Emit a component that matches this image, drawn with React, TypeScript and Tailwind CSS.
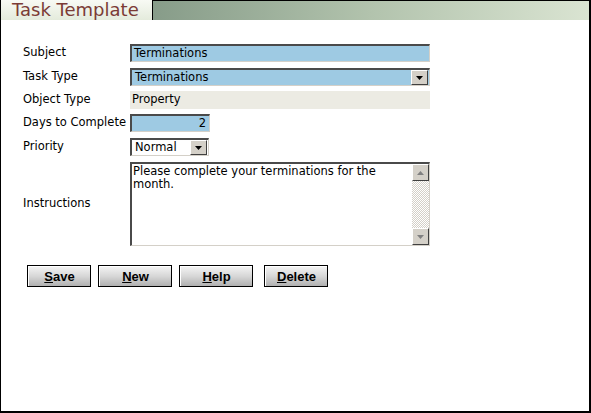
import React from 'react';

const inset =
  'border-t-2 border-l-2 border-t-[#4a4a4a] border-l-[#4a4a4a] border-b border-r border-b-[#d4d0c8] border-r-[#d4d0c8]';

function Arrow({ up = false, color = '#000' }: { up?: boolean; color?: string }) {
  return (
    <svg width="7" height="4" viewBox="0 0 7 4">
      <path d={up ? 'M3.5 0 L7 4 L0 4 Z' : 'M0 0 L7 0 L3.5 4 Z'} fill={color} />
    </svg>
  );
}

function DropButton() {
  return (
    <div className="ml-auto w-[17px] h-[15px] bg-[#d4d0c8] border border-t-white border-l-white border-b-[#404040] border-r-[#404040] flex items-center justify-center">
      <Arrow />
    </div>
  );
}

function Row({ label, h = 'h-[24px]', children }: { label: string; h?: string; children: React.ReactNode }) {
  return (
    <div className={`flex items-start ${h}`}>
      <div className="w-[107px] h-[18px] flex items-center">{label}</div>
      {children}
    </div>
  );
}

function FormButton({ label, w }: { label: string; w: string }) {
  return (
    <button className={`${w} h-[22px] border border-black bg-white p-0`}>
      <div className="h-full w-full border-t border-l border-white bg-gradient-to-b from-[#f2f2f2] via-[#d6d6d6] to-[#b0b0b0] flex items-center justify-center font-['Liberation_Sans',sans-serif] font-bold text-[13px] text-black">
        <span className="underline">{label[0]}</span>
        {label.slice(1)}
      </div>
    </button>
  );
}

export default function App() {
  return (
    <div className="w-[591px] h-[413px] bg-white border-l border-r-2 border-b-2 border-black font-['DejaVu_Sans',sans-serif] text-[11.5px] text-black">
      <div className="flex h-[20px]">
        <div className="w-[152px] bg-gradient-to-b from-[#f8faf4] to-[#e4ebdc] border-r border-black text-[#7b3b35] text-[18px] leading-[20px] pl-[11px]">
          Task Template
        </div>
        <div className="flex-1 border-t border-black bg-gradient-to-r from-[#879c89] via-[#b2c3ad] to-[#dae4d2]" />
      </div>

      <div className="pl-[22px] pt-[24px]">
        <Row label="Subject">
          <div className={`w-[300px] h-[18px] bg-[#9ecae3] ${inset} flex items-center pl-[2px]`}>Terminations</div>
        </Row>
        <Row label="Task Type" h="h-[23px]">
          <div className={`w-[300px] h-[18px] bg-[#9ecae3] ${inset} flex items-center pl-[3px] pr-[1px]`}>
            <span>Terminations</span>
            <DropButton />
          </div>
        </Row>
        <Row label="Object Type" h="h-[23px]">
          <div className="w-[300px] h-[18px] bg-[#ecebe3] flex items-center pl-[2px]">Property</div>
        </Row>
        <Row label="Days to Complete">
          <div className={`w-[80px] h-[18px] bg-[#9ecae3] ${inset} flex items-center justify-end pr-[3px]`}>2</div>
        </Row>
        <Row label="Priority">
          <div className={`w-[79px] h-[18px] bg-white ${inset} flex items-center pl-[3px] pr-[1px]`}>
            <span>Normal</span>
            <DropButton />
          </div>
        </Row>
        <div className="flex items-center h-[84px]">
          <div className="w-[107px]">Instructions</div>
          <div className={`w-[300px] h-[84px] bg-white ${inset} flex`}>
            <div className="flex-1 pl-[1px] pr-[4px] pt-[1px] leading-[13px]">
              Please complete your terminations for the month.
            </div>
            <div className="w-[17px] flex flex-col bg-[repeating-conic-gradient(#d4d0c8_0%_25%,#ffffff_0%_50%)] bg-[length:2px_2px]">
              <div className="h-[17px] bg-[#d4d0c8] border border-t-white border-l-white border-b-[#404040] border-r-[#404040] flex items-center justify-center">
                <Arrow up color="#808080" />
              </div>
              <div className="flex-1" />
              <div className="h-[17px] bg-[#d4d0c8] border border-t-white border-l-white border-b-[#404040] border-r-[#404040] flex items-center justify-center">
                <Arrow color="#808080" />
              </div>
            </div>
          </div>
        </div>
      </div>

      <div className="flex pl-[26px] mt-[19px]">
        <FormButton label="Save" w="w-[64px]" />
        <div className="w-[7px]" />
        <FormButton label="New" w="w-[74px]" />
        <div className="w-[7px]" />
        <FormButton label="Help" w="w-[74px]" />
        <div className="w-[11px]" />
        <FormButton label="Delete" w="w-[64px]" />
      </div>
    </div>
  );
}
